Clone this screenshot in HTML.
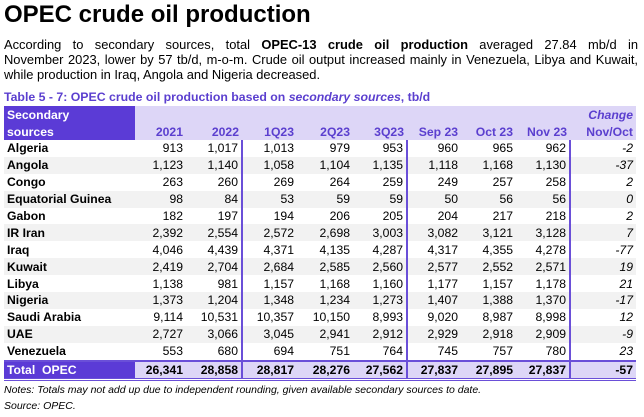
<!DOCTYPE html><html><head><style>
body{margin:0;width:644px;height:417px;background:#fff;font-family:"Liberation Sans",Arial,sans-serif;color:#000;position:relative;overflow:hidden}
h1{position:absolute;left:4px;top:1px;margin:0;font-size:24px;font-weight:bold;letter-spacing:0}
.p{position:absolute;left:4px;top:37px;width:634px;font-size:12.9px;line-height:15px}
.p div{text-align:justify;text-align-last:justify;white-space:nowrap}
.p div.l{text-align-last:left}
.cap{position:absolute;left:4px;top:90px;font-size:12.3px;font-weight:bold;color:#5b3fcf}
table{position:absolute;left:4px;top:106px;border-collapse:collapse;font-size:12.2px}
td{padding:0 3px 0 0;height:16.9px;text-align:right;white-space:nowrap}
td:first-child{text-align:left;font-weight:bold;padding-left:3px;width:125px}
tr.g td{background:#f2f2f2}
thead td{background:#ddd6f7;color:#5b3fcf;font-weight:bold;height:17px}
thead td:first-child{background:#5b3bd6;color:#fff}
.i{font-style:italic}
.bl{border-left:2px solid #6a4fd8}
tr.t td{background:#ddd6f7;font-weight:bold;border-top:2px solid #6a4fd8;border-bottom:3px double #6a4fd8;height:16px}
tr.t td:first-child{background:#5b3bd6;color:#fff}
.n{position:absolute;left:4px;top:382px;font-size:10.5px;font-style:italic;line-height:16px}
</style></head><body>
<h1>OPEC crude oil production</h1>
<div class="p"><div>According to secondary sources, total <b>OPEC-13 crude oil production</b> averaged 27.84 mb/d in</div><div>November 2023, lower by 57 tb/d, m-o-m. Crude oil output increased mainly in Venezuela, Libya and Kuwait,</div><div class="l">while production in Iraq, Angola and Nigeria decreased.</div></div>
<div class="cap">Table 5 - 7: OPEC crude oil production based on <i>secondary sources</i>, tb/d</div>
<table>
<colgroup><col style="width:128px"><col style="width:51px"><col style="width:56px"><col style="width:55px"><col style="width:56px"><col style="width:54px"><col style="width:54px"><col style="width:55px"><col style="width:54px"><col style="width:66px"></colgroup>
<thead>
<tr><td>Secondary</td><td></td><td></td><td></td><td></td><td></td><td></td><td></td><td></td><td class="i">Change</td></tr>
<tr><td>sources</td><td>2021</td><td>2022</td><td>1Q23</td><td>2Q23</td><td>3Q23</td><td>Sep 23</td><td>Oct 23</td><td>Nov 23</td><td>Nov/Oct</td></tr>
</thead>
<tr><td>Algeria</td><td>913</td><td>1,017</td><td class="bl">1,013</td><td>979</td><td>953</td><td class="bl">960</td><td>965</td><td>962</td><td class="bl i">-2</td></tr>
<tr class="g"><td>Angola</td><td>1,123</td><td>1,140</td><td class="bl">1,058</td><td>1,104</td><td>1,135</td><td class="bl">1,118</td><td>1,168</td><td>1,130</td><td class="bl i">-37</td></tr>
<tr><td>Congo</td><td>263</td><td>260</td><td class="bl">269</td><td>264</td><td>259</td><td class="bl">249</td><td>257</td><td>258</td><td class="bl i">2</td></tr>
<tr class="g"><td>Equatorial Guinea</td><td>98</td><td>84</td><td class="bl">53</td><td>59</td><td>59</td><td class="bl">50</td><td>56</td><td>56</td><td class="bl i">0</td></tr>
<tr><td>Gabon</td><td>182</td><td>197</td><td class="bl">194</td><td>206</td><td>205</td><td class="bl">204</td><td>217</td><td>218</td><td class="bl i">2</td></tr>
<tr class="g"><td>IR Iran</td><td>2,392</td><td>2,554</td><td class="bl">2,572</td><td>2,698</td><td>3,003</td><td class="bl">3,082</td><td>3,121</td><td>3,128</td><td class="bl i">7</td></tr>
<tr><td>Iraq</td><td>4,046</td><td>4,439</td><td class="bl">4,371</td><td>4,135</td><td>4,287</td><td class="bl">4,317</td><td>4,355</td><td>4,278</td><td class="bl i">-77</td></tr>
<tr class="g"><td>Kuwait</td><td>2,419</td><td>2,704</td><td class="bl">2,684</td><td>2,585</td><td>2,560</td><td class="bl">2,577</td><td>2,552</td><td>2,571</td><td class="bl i">19</td></tr>
<tr><td>Libya</td><td>1,138</td><td>981</td><td class="bl">1,157</td><td>1,168</td><td>1,160</td><td class="bl">1,177</td><td>1,157</td><td>1,178</td><td class="bl i">21</td></tr>
<tr class="g"><td>Nigeria</td><td>1,373</td><td>1,204</td><td class="bl">1,348</td><td>1,234</td><td>1,273</td><td class="bl">1,407</td><td>1,388</td><td>1,370</td><td class="bl i">-17</td></tr>
<tr><td>Saudi Arabia</td><td>9,114</td><td>10,531</td><td class="bl">10,357</td><td>10,150</td><td>8,993</td><td class="bl">9,020</td><td>8,987</td><td>8,998</td><td class="bl i">12</td></tr>
<tr class="g"><td>UAE</td><td>2,727</td><td>3,066</td><td class="bl">3,045</td><td>2,941</td><td>2,912</td><td class="bl">2,929</td><td>2,918</td><td>2,909</td><td class="bl i">-9</td></tr>
<tr><td>Venezuela</td><td>553</td><td>680</td><td class="bl">694</td><td>751</td><td>764</td><td class="bl">745</td><td>757</td><td>780</td><td class="bl i">23</td></tr>
<tr class="t"><td>Total&nbsp; OPEC</td><td>26,341</td><td>28,858</td><td class="bl">28,817</td><td>28,276</td><td>27,562</td><td class="bl">27,837</td><td>27,895</td><td>27,837</td><td class="bl">-57</td></tr>
</table>
<div class="n">Notes: Totals may not add up due to independent rounding, given available secondary sources to date.<br>Source: OPEC.</div>
</body></html>
